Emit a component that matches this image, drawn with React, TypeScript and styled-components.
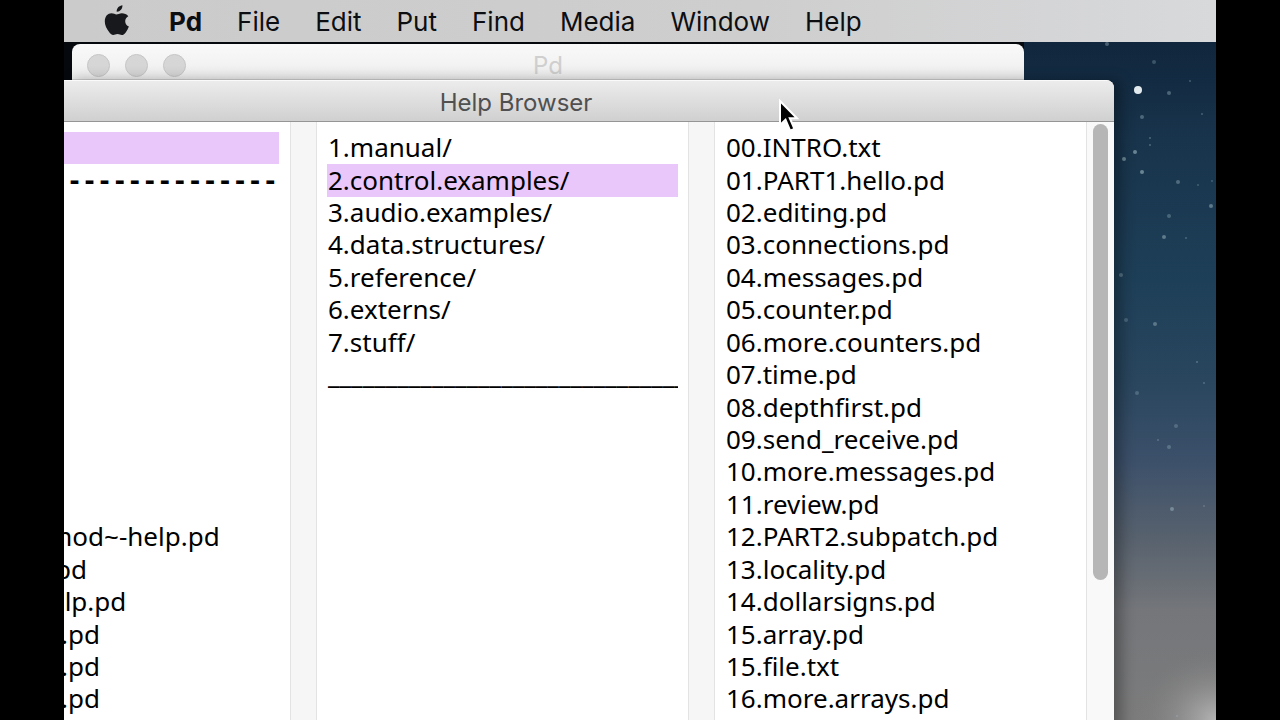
import React from "react";
import styled, { createGlobalStyle } from "styled-components";

const Global = createGlobalStyle`
  *, *::before, *::after { box-sizing: border-box; }
  body { margin: 0; background: #000; font-family: Inter, "Liberation Sans", sans-serif; }
  button { border: 0; padding: 0; background: none; color: inherit; font: inherit; cursor: default; }
`;

const Frame = styled.div`
  height: 100vh;
  padding: 0 5%;
  overflow: hidden;
  background: #000;
`;

const Desktop = styled.main`
  position: relative;
  height: 100%;
  overflow: hidden;
  background: linear-gradient(180deg, #10263c 42px, #18344c 140px, #1e3f58 280px, #29465e 380px, #3c506a 460px, #58626e 540px, #74767a 610px, #7c7c7c 720px);
`;

const Sky = styled.svg`
  position: absolute;
  top: 0;
  right: 0;
  width: 200px;
  height: 720px;
`;

const MenuBar = styled.nav`
  position: relative;
  display: flex;
  align-items: center;
  gap: 35px;
  height: 42px;
  padding: 2px 0 0 40px;
  background: linear-gradient(90deg, #cbcbcb, #cecece 60%, #d8d9db);
  color: #0c0e11;
  font-size: 26px;
  line-height: 40px;
`;

const MenuItem = styled.button<{ $strong?: boolean }>`
  && {
    font-weight: ${(p) => (p.$strong ? 700 : 400)};
  }
`;

const AppleIcon = styled.svg`
  width: 26px;
  height: 32px;
  margin: 0 4px 2px 0;
  fill: #17191c;
`;

const PdWindow = styled.section`
  position: relative;
  height: 38px;
  margin-right: 192px;
  padding: 2px 0 0 8px;
  background: #05080c;
`;

const PdTitleBar = styled.header`
  display: grid;
  grid-template-columns: 1fr auto 1fr;
  align-items: center;
  height: 36px;
  padding: 6px 15px 0;
  border-radius: 8px 8px 0 0;
  border-bottom: 1px solid #d0d0d0;
  background: linear-gradient(#f9f9f9, #eeeeee);
`;

const Lights = styled.div`
  display: flex;
  gap: 15px;
`;

const Light = styled.button`
  && {
    width: 23px;
    height: 23px;
    border: 1px solid #c6c6c6;
    border-radius: 50%;
    background: #d6d6d6;
  }
`;

const Title = styled.h1<{ $active?: boolean }>`
  margin: 0;
  padding-top: 2px;
  color: ${(p) => (p.$active ? "#505050" : "#cfcfcf")};
  font-size: 24px;
  font-weight: 400;
  line-height: 28px;
`;

const Browser = styled.section`
  position: relative;
  margin-right: 102px;
  border-radius: 0 8px 0 0;
  overflow: hidden;
  background: #fff;
  box-shadow: 8px 0 14px rgba(0, 0, 0, 0.3);
`;

const BrowserTitleBar = styled.header`
  display: flex;
  align-items: center;
  justify-content: center;
  height: 42px;
  padding: 2px 146px 0 0;
  border-top: 1px solid #fafafa;
  border-bottom: 1px solid #959595;
  background: linear-gradient(#ececec, #d0d0d0);
`;

const Columns = styled.div`
  display: grid;
  grid-template-columns: 226fr 27px 371fr 27px 371fr 28px;
`;

const Gutter = styled.div`
  border: solid #e3e3e3;
  border-width: 0 1px;
  background: #f6f6f6;
`;

const ScrollTrack = styled.div`
  display: flex;
  justify-content: center;
  padding-top: 2px;
  border-left: 1px solid #e3e3e3;
  background: #f9f9f9;
`;

const ScrollThumb = styled.div`
  width: 15px;
  height: 456px;
  border-radius: 8px;
  background: #b6b6b6;
`;

const List = styled.ul<{ $flush?: boolean }>`
  display: grid;
  grid-template-rows: repeat(19, minmax(32px, 1fr));
  height: calc(100vh - 104px);
  margin: 10px 0 0;
  padding: ${(p) => (p.$flush ? "0 11px 0 0" : "0 10px")};
  min-width: 0;
  list-style: none;
  color: #000;
  font-family: "Noto Sans", "Open Sans", sans-serif;
  font-size: 26px;
  line-height: 30px;
`;

const Row = styled.li<{ $selected?: boolean }>`
  display: flex;
  align-items: center;
  min-width: 0;
  overflow: hidden;
  white-space: pre;
  background: ${(p) => (p.$selected ? "#eac7fb" : "transparent")};
`;

const Entry = styled.button<{ $cut?: number }>`
  && {
    flex: 1;
    padding: 0 0 2px 1px;
    text-align: left;
    text-indent: ${(p) => -(p.$cut ?? 0)}px;
    white-space: pre;
  }
`;

const Dashes = styled.span`
  padding-left: 3px;
  font-family: "DejaVu Sans Mono", monospace;
  font-size: 25px;
  font-weight: 700;
`;

const Pointer = styled.svg`
  position: absolute;
  top: 97px;
  left: 713px;
  width: 24px;
  height: 38px;
`;

type Item = { text: string; cut?: number; selected?: boolean; rule?: "dash" };

const packages: Item[] = [
  { text: "", selected: true },
  { text: "--------------", rule: "dash" },
  ...Array.from({ length: 10 }, () => ({ text: "" })),
  { text: "mod~-help.pd", cut: 17 },
  { text: "pd", cut: 10 },
  { text: "elp.pd", cut: 15 },
  { text: ".pd", cut: 4 },
  { text: ".pd", cut: 4 },
  { text: ".pd", cut: 4 },
];

const folders: Item[] = [
  { text: "1.manual/" },
  { text: "2.control.examples/", selected: true },
  { text: "3.audio.examples/" },
  { text: "4.data.structures/" },
  { text: "5.reference/" },
  { text: "6.externs/" },
  { text: "7.stuff/" },
  { text: "________________________________" },
];

const files: Item[] = [
  "00.INTRO.txt",
  "01.PART1.hello.pd",
  "02.editing.pd",
  "03.connections.pd",
  "04.messages.pd",
  "05.counter.pd",
  "06.more.counters.pd",
  "07.time.pd",
  "08.depthfirst.pd",
  "09.send_receive.pd",
  "10.more.messages.pd",
  "11.review.pd",
  "12.PART2.subpatch.pd",
  "13.locality.pd",
  "14.dollarsigns.pd",
  "15.array.pd",
  "15.file.txt",
  "16.more.arrays.pd",
].map((text) => ({ text }));

// x, y, radius, opacity
const stars: [number, number, number, number][] = [
  [122, 90, 4, 0.95], [91, 44, 2, 0.4], [138, 62, 2, 0.3], [174, 81, 1, 0.35],
  [153, 93, 2, 0.4], [126, 117, 2, 0.4], [186, 114, 1, 0.35], [134, 138, 1, 0.4],
  [134, 145, 1, 0.4], [119, 152, 2, 0.6], [108, 159, 2, 0.6], [126, 172, 2, 0.6],
  [162, 182, 2, 0.4], [182, 185, 1, 0.3], [196, 181, 1, 0.3], [195, 206, 2, 0.5],
  [153, 216, 2, 0.35], [148, 237, 2, 0.5], [170, 238, 1, 0.35], [105, 275, 2, 0.4],
  [110, 320, 2, 0.3], [139, 324, 2, 0.45], [181, 362, 1, 0.4], [188, 383, 1, 0.35],
  [121, 393, 2, 0.3], [160, 426, 2, 0.3], [142, 440, 1, 0.35], [153, 447, 2, 0.35],
  [156, 509, 2, 0.5], [188, 506, 1, 0.3], [161, 716, 1, 0.4],
];

function Listing({ items, label, flush }: { items: Item[]; label: string; flush?: boolean }) {
  return (
    <List $flush={flush} aria-label={label}>
      {items.map((item, i) => (
        <Row key={i} $selected={item.selected}>
          {item.rule ? (
            <Dashes>{item.text}</Dashes>
          ) : (
            item.text && <Entry $cut={item.cut}>{item.text}</Entry>
          )}
        </Row>
      ))}
    </List>
  );
}

export default function App() {
  return (
    <Frame>
      <Global />
      <Desktop>
        <Sky viewBox="0 0 200 720" aria-hidden="true">
          <defs>
            <radialGradient id="galaxy" cx="1" cy="1" r="1">
              <stop offset="0" stopColor="#b4b4b4" />
              <stop offset="0.5" stopColor="#909090" stopOpacity="0.7" />
              <stop offset="1" stopColor="#7c7c7c" stopOpacity="0" />
            </radialGradient>
          </defs>
          <rect x="120" y="650" width="80" height="70" fill="url(#galaxy)" />
          {stars.map(([x, y, r, o]) => (
            <circle key={`${x}-${y}`} cx={x} cy={y} r={r} fill={r > 3 ? "#eef4f8" : "#9fb9c2"} opacity={o} />
          ))}
        </Sky>

        <MenuBar aria-label="Menu bar">
          <AppleIcon viewBox="0 0 26 32" aria-label="Apple">
            <path d="M18.4 0.200c.2 1.800-.5 3.400-1.500 4.600-1.100 1.300-2.600 2.100-4.200 2-.2-1.700.6-3.400 1.500-4.500 1.100-1.200 2.800-2 4.200-2.100z" />
            <path d="M24.300 11.200c-2.100 1.300-3.100 2.900-3.100 5 0 2.500 1.400 4.400 3.700 5.300-.7 2.100-1.800 4.100-3.200 5.900-1.100 1.400-2.200 2.600-3.900 2.600-1.600 0-2.200-1-4.300-1-2 0-2.700 1-4.300 1-1.700 0-2.900-1.400-4.100-3C2.600 23.700.8 20.200.8 16.400c0-5.200 3.100-8.100 6.700-8.100 2 0 3.700 1.200 4.900 1.200 1.200 0 3.100-1.300 5.500-1.300 2.300 0 4.900.8 6.400 3z" />
          </AppleIcon>
          <MenuItem $strong>Pd</MenuItem>
          {["File", "Edit", "Put", "Find", "Media", "Window", "Help"].map((m) => (
            <MenuItem key={m}>{m}</MenuItem>
          ))}
        </MenuBar>

        <PdWindow aria-label="Pd">
          <PdTitleBar>
            <Lights>
              <Light aria-label="Close" />
              <Light aria-label="Minimize" />
              <Light aria-label="Zoom" />
            </Lights>
            <Title>Pd</Title>
          </PdTitleBar>
        </PdWindow>

        <Browser aria-label="Help Browser">
          <BrowserTitleBar>
            <Title $active>Help Browser</Title>
          </BrowserTitleBar>
          <Columns>
            <Listing items={packages} label="Packages" flush />
            <Gutter />
            <Listing items={folders} label="Folders" />
            <Gutter />
            <Listing items={files} label="Files" />
            <ScrollTrack>
              <ScrollThumb />
            </ScrollTrack>
          </Columns>
        </Browser>

        <Pointer viewBox="0 0 24 38" aria-hidden="true">
          <path
            d="M3 4v24l5.500-5.200 4.600 10.900 4.300-1.900-4.600-10.600h7.200z"
            fill="#000"
            stroke="#fff"
            strokeWidth="2"
          />
        </Pointer>
      </Desktop>
    </Frame>
  );
}
